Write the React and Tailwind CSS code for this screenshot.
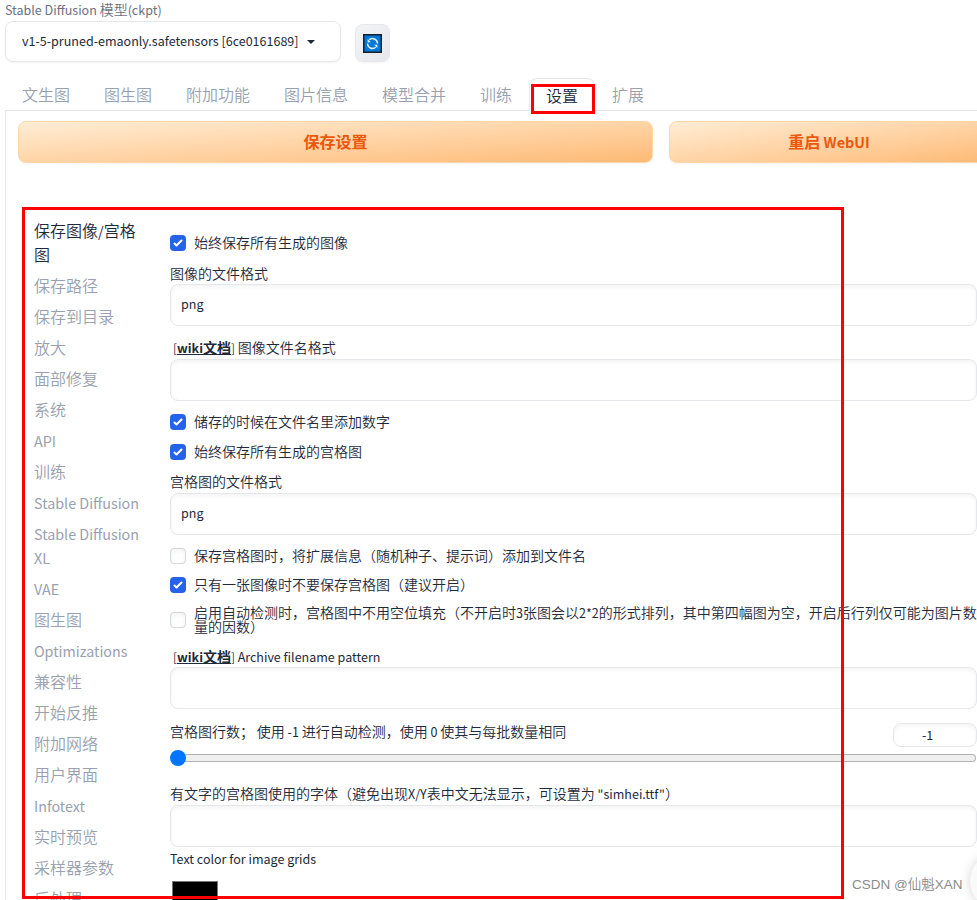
import { useState } from "react";

const tabs = ["文生图", "图生图", "附加功能", "图片信息", "模型合并", "训练", "设置", "扩展"];

const sections = [
  "保存图像/宫格图",
  "保存路径",
  "保存到目录",
  "放大",
  "面部修复",
  "系统",
  "API",
  "训练",
  "Stable Diffusion",
  "Stable Diffusion XL",
  "VAE",
  "图生图",
  "Optimizations",
  "兼容性",
  "开始反推",
  "附加网络",
  "用户界面",
  "Infotext",
  "实时预览",
  "采样器参数",
  "后处理",
];

function App() {
  const [tab, setTab] = useState("设置");
  const [section, setSection] = useState(sections[0]);

  return (
    <div className="relative h-[900px] w-[977px] overflow-hidden bg-white font-['Noto_Sans_CJK_SC','Noto_Sans',sans-serif] font-[350] text-gray-800">
      <header className="h-[78px] pl-[5px]">
        <div className="flex h-[21px] items-center pb-[3px] text-sm text-gray-500">
          <Mixed text="Stable Diffusion 模型(ckpt)" />
        </div>
        <div className="flex gap-[14px]">
          <div className="flex h-[41px] w-[336px] items-center rounded-lg border border-gray-200 pl-4 text-sm shadow-xs">
            <span className="pb-[3px]">
              <Mixed text="v1-5-pruned-emaonly.safetensors [6ce0161689]" />
            </span>
            <svg className="ml-2 h-1 w-2" viewBox="0 0 8 4">
              <path d="M0 0h8L4 4z" fill="#1f2937" />
            </svg>
          </div>
          <button className="mt-[3px] flex h-[38px] w-[35px] items-center justify-center rounded-lg border border-gray-200 bg-linear-to-br from-gray-100 to-gray-200 shadow-xs">
            <RefreshIcon />
          </button>
        </div>
      </header>

      <nav className="flex h-8 pl-[5px] text-base">
        {tabs.map((name) => (
          <button
            key={name}
            onClick={() => setTab(name)}
            className={
              name === tab
                ? "relative z-10 -mb-px h-[33px] rounded-t-lg border border-b-0 border-gray-200 bg-white px-4 leading-7 text-gray-800"
                : "h-8 border border-transparent px-4 leading-7 text-gray-400"
            }
          >
            {name}
          </button>
        ))}
      </nav>

      <main className="ml-[5px] h-[790px] w-[1000px] border-t border-l border-gray-200">
        <div className="flex gap-4 pt-[10px] pl-3">
          <PrimaryButton className="w-[635px]">保存设置</PrimaryButton>
          <PrimaryButton className="w-[320px]">重启 WebUI</PrimaryButton>
        </div>

        <div className="mt-[55px] flex pl-7">
          <aside className="flex w-[136px] flex-col gap-[7px] pr-6 text-base leading-6">
            {sections.map((name) => (
              <button
                key={name}
                onClick={() => setSection(name)}
                className={name === section ? "text-left text-gray-800" : "text-left text-gray-400"}
              >
                <Mixed text={name} />
              </button>
            ))}
          </aside>

          <section className="w-[807px] pt-[10px] text-sm">
            <Check label="始终保存所有生成的图像" checked className="h-[30px]" />
            <Label className="mt-[6px]" text="图像的文件格式" />
            <TextBox value="png" />
            <Label className="mt-3 mb-px" text="图像文件名格式" wiki />
            <TextBox />
            <Check label="储存的时候在文件名里添加数字" checked className="mt-[6px] h-[30px]" />
            <Check label="始终保存所有生成的宫格图" checked className="h-[30px]" />
            <Label className="mt-[5px] mb-px" text="宫格图的文件格式" />
            <TextBox value="png" />
            <Check label="保存宫格图时，将扩展信息（随机种子、提示词）添加到文件名" className="mt-[6px] h-[30px]" />
            <Check label="只有一张图像时不要保存宫格图（建议开启）" checked className="h-7" />
            <Check
              label="启用自动检测时，宫格图中不用空位填充（不开启时3张图会以2*2的形式排列，其中第四幅图为空，开启后行列仅可能为图片数量的因数）"
              className="mt-[7px] h-[28px]"
            />
            <Label className="mt-[13px]" text="Archive filename pattern" wiki />
            <TextBox />

            <div className="mt-[13px] flex justify-between">
              <Label text="宫格图行数； 使用 -1 进行自动检测，使用 0 使其与每批数量相同" />
              <div className="mt-px flex h-6 w-[84px] items-center rounded-lg border border-gray-200 pb-[3px] pl-7 shadow-[inset_0_2px_4px_rgba(0,0,0,0.05)]">
                <Mixed text="-1" />
              </div>
            </div>
            <div className="mt-[3px] mr-px flex h-4 items-center">
              <span className="z-10 h-4 w-4 rounded-full bg-[#0075ff]" />
              <span className="-ml-1 h-2 flex-1 rounded-r-full border border-l-0 border-[#b2b2b2] bg-[#efefef]" />
            </div>

            <Label className="mt-[18px] mb-px" text={'有文字的宫格图使用的字体（避免出现X/Y表中文无法显示，可设置为 "simhei.ttf"）'} />
            <TextBox />
            <Label className="mt-[2px]" text="Text color for image grids" />
            <div className="mt-3 ml-[2px] h-[23px] w-[46px] border border-[#767676] bg-black" />
          </section>
        </div>
      </main>

      <div className="absolute top-[84px] left-[531px] z-20 h-[30px] w-16 border-3 border-[#ff0000]" />
      <div className="absolute top-[207px] left-[22px] z-20 h-[692px] w-[822px] border-3 border-[#ff0000]" />
      <div className="absolute top-[853px] left-[970px] h-14 w-14 rounded-full bg-[#fafafa] shadow-[0_0_12px_rgba(0,0,0,0.16)]" />
      <div className="absolute top-[875px] left-[852px] font-['Liberation_Sans','Noto_Sans_CJK_SC',sans-serif] text-[13.5px] leading-5 whitespace-nowrap text-[#8b8b8b]">
        CSDN @仙魁XAN
      </div>
    </div>
  );
}

// Latin runs are set a little smaller so they sit well beside the Chinese glyphs.
function Mixed({ text }) {
  const runs = text.match(/[\x20-\x7e]+|[^\x20-\x7e]+/g) || [];

  return (
    <span>
      {runs.map((run, i) =>
        /[\x20-\x7e]/.test(run) ? (
          <span key={i} className="text-[0.895em] leading-none font-normal in-[.font-bold]:font-bold in-[.font-semibold]:font-bold">{run}</span>
        ) : (
          run
        )
      )}
    </span>
  );
}

function PrimaryButton({ className, children }) {
  return (
    <button
      className={`h-[42px] shrink-0 rounded-lg border border-orange-200 bg-linear-to-br from-[#ffedd5] to-[#fdba74] pb-[2px] text-base font-semibold text-[#ea580c] shadow-xs ${className}`}
    >
      <Mixed text={children} />
    </button>
  );
}

function Label({ text, wiki, className = "" }) {
  return (
    <div className={`flex h-5 items-center pb-[2px] whitespace-pre ${className}`}>
      {wiki && (
        <span className="ml-[3px] text-[0.86em]">
          [<a className="text-sm font-bold underline"><Mixed text="wiki文档" /></a>]{" "}
        </span>
      )}
      <Mixed text={text} />
    </div>
  );
}

function TextBox({ value = "" }) {
  return (
    <div className="flex h-[42px] items-center rounded-lg border border-gray-200 px-[10px] pb-[5px] shadow-[inset_0_2px_4px_rgba(0,0,0,0.05)]">
      <Mixed text={value} />
    </div>
  );
}

function Check({ label, checked, className }) {
  return (
    <div className={`flex items-center gap-2 ${className}`}>
      {checked ? (
        <span className="h-4 w-4 shrink-0 rounded bg-[#2563eb]">
          <svg viewBox="0 0 16 16" fill="#fff">
            <path d="M12.207 4.793a1 1 0 010 1.414l-5 5a1 1 0 01-1.414 0l-2-2a1 1 0 011.414-1.414L6.5 9.086l4.293-4.293a1 1 0 011.414 0z" />
          </svg>
        </span>
      ) : (
        <span className="h-4 w-4 shrink-0 rounded border border-gray-300 shadow-[inset_0_2px_4px_rgba(0,0,0,0.05)]" />
      )}
      <span className="pb-[2px] leading-[14px]">
        <Mixed text={label} />
      </span>
    </div>
  );
}

function RefreshIcon() {
  return (
    <svg className="h-[19px] w-[19px]" viewBox="0 0 19 19" fill="none">
      <rect x="0.75" y="0.75" width="17.5" height="17.5" fill="#0078d7" stroke="#17202b" strokeWidth="1.5" />
      <path d="M6.2 5.8A5 5 0 0 1 14.5 9.5M12.8 13.2A5 5 0 0 1 4.5 9.5" stroke="#e6f3ff" strokeWidth="1.4" />
      <path d="M4.6 5v3.3h3.3zM14.4 14v-3.3h-3.3z" fill="#e6f3ff" />
    </svg>
  );
}

export default App;
